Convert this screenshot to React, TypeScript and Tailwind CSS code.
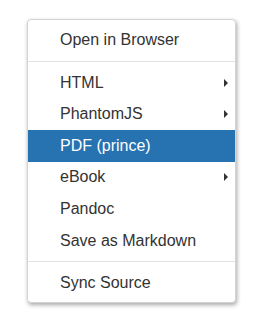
type Item = { label: string; sub?: boolean; active?: boolean } | "sep"

const items: Item[] = [
  { label: "Open in Browser" },
  "sep",
  { label: "HTML", sub: true },
  { label: "PhantomJS", sub: true },
  { label: "PDF (prince)", active: true },
  { label: "eBook", sub: true },
  { label: "Pandoc" },
  { label: "Save as Markdown" },
  "sep",
  { label: "Sync Source" },
]

function Caret({ active }: { active?: boolean }) {
  return (
    <svg width="4" height="8" viewBox="0 0 4 8" className={active ? "fill-white" : "fill-[#333]"}>
      <path d="M0 0 L4 4 L0 8 Z" />
    </svg>
  )
}

export default function App() {
  return (
    <div className="w-[264px] h-[332px] bg-white pt-[19px] pl-[27px]">
      <div
        className="w-[209px] pt-[4.5px] pb-[3.5px] bg-white border border-[#d4d4d4] rounded-[4px] shadow-[1px_2px_4px_rgba(0,0,0,0.35)]"
        style={{ fontFamily: '"Liberation Sans", Arial, sans-serif' }}
      >
        {items.map((it, i) =>
          it === "sep" ? (
            <div key={i} className="h-px bg-[#e2e2e2] my-[4.9px]" />
          ) : (
            <div
              key={i}
              className={`h-[31.6px] flex items-center justify-between pl-[32px] pr-[7px] text-[16px] ${
                it.active ? "bg-[#2772b0] text-white" : "text-[#333]"
              }`}
            >
              <span>{it.label}</span>
              {it.sub && <Caret active={it.active} />}
            </div>
          )
        )}
      </div>
    </div>
  )
}
